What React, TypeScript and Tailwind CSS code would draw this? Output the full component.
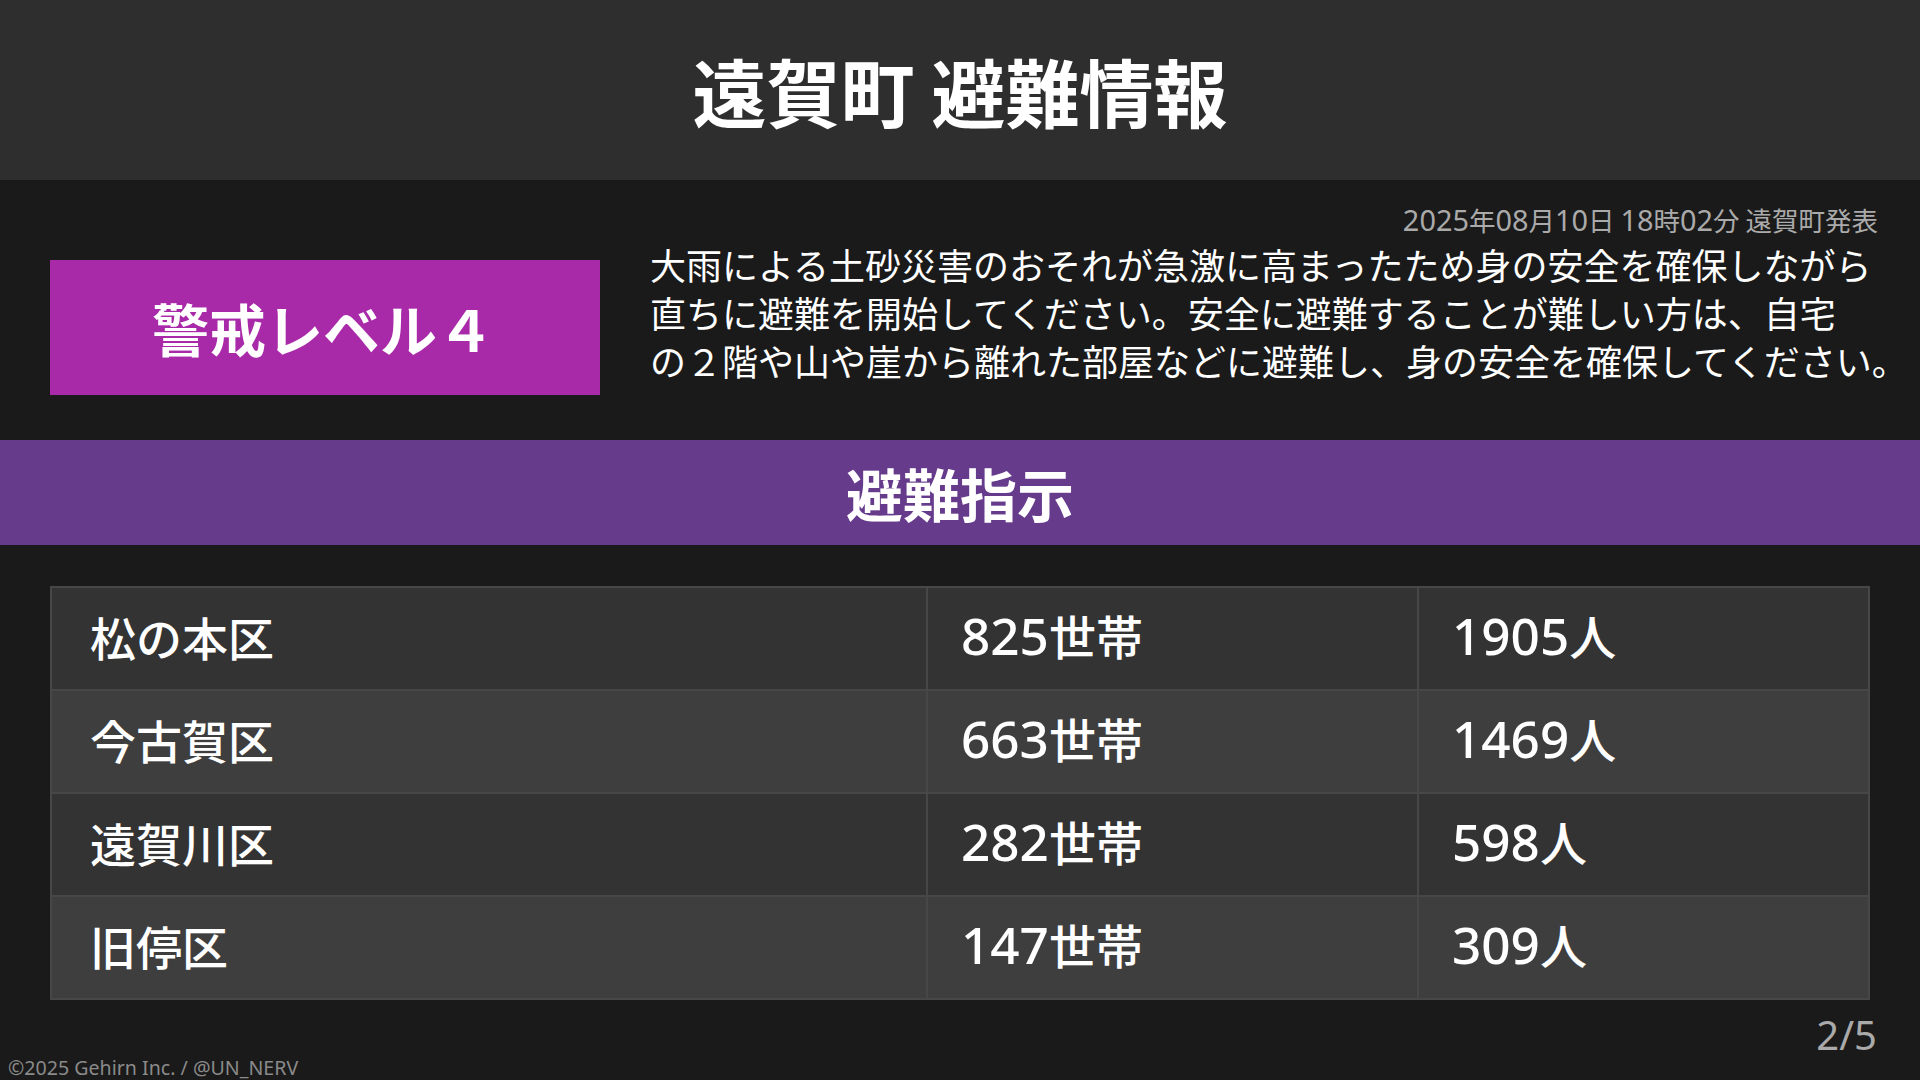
import React from "react"

const rows = [
  { area: "松の本区", households: "825世帯", people: "1905人" },
  { area: "今古賀区", households: "663世帯", people: "1469人" },
  { area: "遠賀川区", households: "282世帯", people: "598人" },
  { area: "旧停区", households: "147世帯", people: "309人" },
]

// digits are set in the latin face, a touch larger than the CJK glyphs
function Txt({ text }: { text: string }) {
  return (
    <>
      {text.split(/(\d+)/).map((part, i) =>
        /^\d+$/.test(part) ? (
          <span key={i} className="font-[family-name:'Noto_Sans',sans-serif] text-[1.09em]">
            {part}
          </span>
        ) : (
          <React.Fragment key={i}>{part}</React.Fragment>
        )
      )}
    </>
  )
}

export default function App() {
  return (
    <div className="flex h-[1080px] w-[1920px] flex-col overflow-hidden bg-[#1a1a1a] font-[family-name:'Noto_Sans_CJK_JP','Noto_Sans',sans-serif] text-white">
      {/* Header */}
      <header className="flex h-[180px] shrink-0 items-center justify-center bg-[#2e2e2e]">
        <h1 className="text-[74px] font-bold leading-none">遠賀町 避難情報</h1>
      </header>

      {/* Warning level + message */}
      <section className="h-[260px] shrink-0 pl-[50px] pr-[42px] pt-[20px]">
        <div className="text-right text-[26.5px] leading-[40px] text-[#aaaaaa]">
          <Txt text="2025年08月10日 18時02分 遠賀町発表" />
        </div>
        <div className="flex items-start gap-[50px]">
          <div className="mt-[20px] flex h-[135px] w-[550px] shrink-0 items-center justify-center bg-[#a92aa8]">
            <span className="pr-[4px] text-[57px] font-bold leading-none">警戒レベル４</span>
          </div>
          <div className="whitespace-nowrap text-[36px] leading-[48px]">
            <div>大雨による土砂災害のおそれが急激に高まったため身の安全を確保しながら</div>
            <div>直ちに避難を開始してください。安全に避難することが難しい方は、自宅</div>
            <div>の２階や山や崖から離れた部屋などに避難し、身の安全を確保してください。</div>
          </div>
        </div>
      </section>

      {/* Section band */}
      <div className="flex h-[105px] shrink-0 items-center justify-center bg-[#673b8c]">
        <h2 className="text-[57px] font-bold leading-none">避難指示</h2>
      </div>

      {/* Table */}
      <div className="shrink-0 px-[50px] pt-[41px]">
        <table className="w-full border-collapse border-2 border-[#474747]">
          <tbody>
            {rows.map((r, i) => (
              <tr key={r.area} className={i % 2 === 0 ? "bg-[#333333]" : "bg-[#3e3e3e]"}>
                <td className="h-[103px] w-[876px] border-2 border-[#474747] pb-[6px] pl-[38px] text-[46px] font-medium leading-none">
                  {r.area}
                </td>
                <td className="w-[491px] border-2 border-[#474747] pb-[6px] pl-[33px] text-[47px] font-medium leading-none">
                  <Txt text={r.households} />
                </td>
                <td className="border-2 border-[#474747] pb-[6px] pl-[33px] text-[47px] font-medium leading-none">
                  <Txt text={r.people} />
                </td>
              </tr>
            ))}
          </tbody>
        </table>
      </div>

      {/* Footer */}
      <footer className="flex flex-1 items-end justify-between font-[family-name:'Noto_Sans',sans-serif]">
        <span className="pl-[8px] text-[19.6px] leading-[24px] text-[#8a8a8a]">©2025 Gehirn Inc. / @UN_NERV</span>
        <span className="mb-[25px] pr-[43px] text-[40px] leading-none text-[#aaaaaa]">2/5</span>
      </footer>
    </div>
  )
}
